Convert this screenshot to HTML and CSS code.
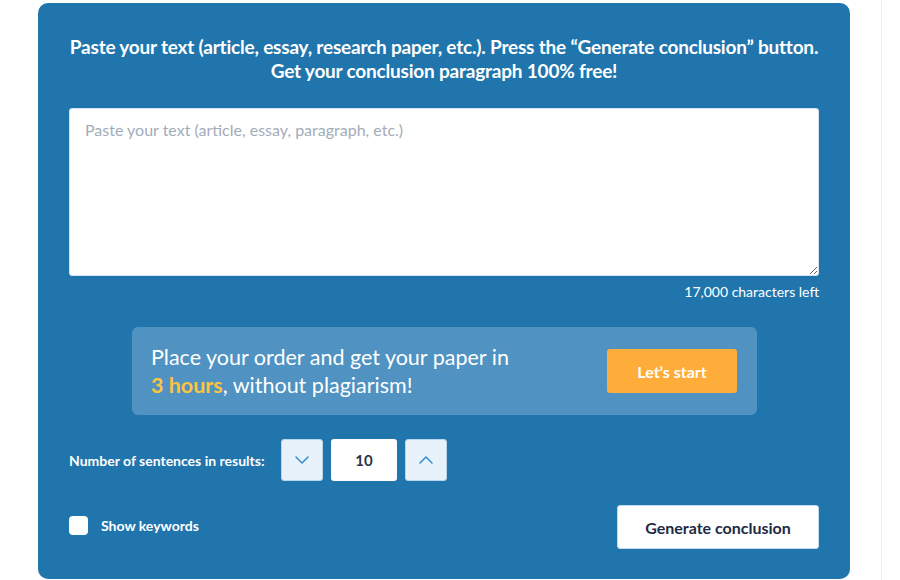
FILE: index.html
```html
<!DOCTYPE html>
<html>
<head>
<meta charset="utf-8">
<link rel="stylesheet" href="styles.css">
</head>
<body>
<div class="page">
  <div class="panel">
    <p class="intro">Paste your text (article, essay, research paper, etc.). Press the “Generate conclusion” button.<br>Get your conclusion paragraph 100% free!</p>
    <textarea class="input" placeholder="Paste your text (article, essay, paragraph, etc.)"></textarea>
    <div class="counter">17,000 characters left</div>
    <div class="promo">
      <p class="promo-text">Place your order and get your paper in<br><span class="hl">3 hours</span>, without plagiarism!</p>
      <button class="start">Let’s start</button>
    </div>
    <div class="sentences">
      <span class="label">Number of sentences in results:</span>
      <button class="step"><svg width="16" height="10" viewBox="0 0 16 10"><path d="M2 2 L8 8 L14 2" fill="none" stroke="#3a8fd0" stroke-width="1.6" stroke-linecap="round" stroke-linejoin="round"/></svg></button>
      <div class="value">10</div>
      <button class="step"><svg width="16" height="10" viewBox="0 0 16 10"><path d="M2 8 L8 2 L14 8" fill="none" stroke="#3a8fd0" stroke-width="1.6" stroke-linecap="round" stroke-linejoin="round"/></svg></button>
    </div>
    <div class="bottom">
      <label class="check"><span class="box"></span>Show keywords</label>
      <button class="generate">Generate conclusion</button>
    </div>
  </div>
  <div class="side"></div>
</div>
</body>
</html>
```
FILE: styles.css
```css
* { box-sizing: border-box; }
html, body { margin: 0; padding: 0; background: #fff; }
body { font-family: Lato, "Open Sans", sans-serif; width: 900px; height: 580px; overflow: hidden; }
.page { display: flex; padding: 3px 0 0 38px; height: 580px; }
.panel {
  width: 812px;
  height: 576px;
  background: #2075ad;
  border-radius: 10px;
  padding: 32px 31px 0 31px;
  color: #fff;
}
.side { width: 1px; margin-left: 31px; background: #eef0f3; height: 580px; margin-top: -3px; }
.intro {
  margin: 0;
  text-align: center;
  font-weight: 700;
  font-size: 19px;
  line-height: 24px;
  letter-spacing: -0.2px;
  white-space: nowrap;
}
.input {
  display: block;
  margin-top: 25px;
  width: 750px;
  height: 168px;
  border: 1px solid #d6e2ee;
  border-radius: 3px;
  padding: 11px 15px;
  font-family: Lato, sans-serif;
  font-size: 16px;
  resize: vertical;
  background: #fff;
}
.input::placeholder { color: #a3acb9; }
.counter { text-align: right; font-size: 14px; margin-top: 8px; line-height: 16px; }
.promo {
  margin: 27px 0 0 63px;
  width: 625px;
  height: 88px;
  background: #5092c1;
  border-radius: 6px;
  display: flex;
  align-items: center;
  justify-content: space-between;
  padding: 0 20px 0 19px;
}
.promo-text { margin: 0; font-size: 21.5px; line-height: 28px; }
.hl { color: #ffc43d; font-weight: 700; }
.start {
  width: 130px;
  height: 44px;
  border: none;
  border-radius: 3px;
  background: #ffad3a;
  color: #fff;
  font-family: Lato, sans-serif;
  font-weight: 700;
  font-size: 16px;
}
.sentences { display: flex; align-items: center; margin-top: 24px; }
.label { font-weight: 700; font-size: 14px; margin-right: 16px; width: 196px; }
.step {
  width: 42px;
  height: 42px;
  background: #e8f2fb;
  border: 1px solid #b9d4ec;
  border-radius: 3px;
  display: flex;
  align-items: center;
  justify-content: center;
  padding: 0;
}
.value {
  width: 66px;
  height: 42px;
  margin: 0 8px;
  background: #fff;
  border-radius: 3px;
  color: #2b3448;
  font-weight: 700;
  font-size: 15px;
  display: flex;
  align-items: center;
  justify-content: center;
}
.bottom { display: flex; justify-content: space-between; align-items: center; margin-top: 24px; }
.check { display: flex; align-items: center; font-weight: 700; font-size: 14px; margin-top: -3px; }
.box { width: 19px; height: 19px; background: #fff; border-radius: 4px; margin-right: 13px; }
.generate {
  width: 202px;
  height: 44px;
  background: #fff;
  border: 1px solid #c5dcef;
  border-radius: 3px;
  color: #1e2a44;
  font-family: Lato, sans-serif;
  font-weight: 700;
  font-size: 16px;
}
```
